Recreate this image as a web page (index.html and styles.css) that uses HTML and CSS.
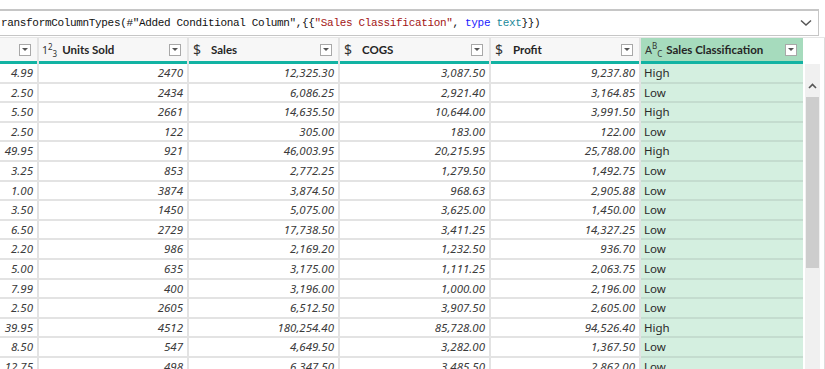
FILE: index.html
```html
<!DOCTYPE html>
<html lang="en">
<head>
  <meta charset="UTF-8">
  <meta name="viewport" content="width=device-width, initial-scale=1.0">
  <title>Query Editor - Sales Classification</title>
  <link rel="stylesheet" href="styles.css">
</head>
<body>
  <!-- formula bar -->
  <div class="formula-bar">
    <div class="formula-box">
      <div class="formula-text">ransformColumnTypes(#"Added Conditional Column",{{<span class="str">"Sales Classification"</span>, <span class="kw">type</span> <span class="ty">text</span>}})</div>
      <svg class="formula-toggle" width="12" height="8" viewBox="0 0 12 8">
        <path d="M1 1.5 L6 6 L11 1.5" fill="none" stroke="#555" stroke-width="1.5"/>
      </svg>
    </div>
  </div>

  <div class="grid-area">
    <div class="table">
      <div class="row header">
        <div class="hcell">
          <div class="hcell-inner"><span class="drop"></span></div>
          <div class="hcell-line"></div>
        </div>
        <div class="hcell">
          <div class="hcell-inner"><span class="type-icon num-icon">1<sup>2</sup><sub>3</sub></span><span class="hlabel">Units Sold</span><span class="drop"></span></div>
          <div class="hcell-line"></div>
        </div>
        <div class="hcell">
          <div class="hcell-inner"><span class="type-icon dollar">$</span><span class="hlabel">Sales</span><span class="drop"></span></div>
          <div class="hcell-line"></div>
        </div>
        <div class="hcell">
          <div class="hcell-inner"><span class="type-icon dollar">$</span><span class="hlabel">COGS</span><span class="drop"></span></div>
          <div class="hcell-line"></div>
        </div>
        <div class="hcell">
          <div class="hcell-inner"><span class="type-icon dollar">$</span><span class="hlabel">Profit</span><span class="drop"></span></div>
          <div class="hcell-line"></div>
        </div>
        <div class="hcell selected">
          <div class="hcell-inner"><span class="type-icon text-icon">A<sup>B</sup><sub>C</sub></span><span class="hlabel">Sales Classification</span><span class="drop"></span></div>
          <div class="hcell-line"></div>
        </div>
      </div>
      <div id="rows"></div>
    </div>

    <div class="scrollbar">
      <div class="track">
        <svg class="scroll-up" width="9" height="6" viewBox="0 0 9 6">
          <path d="M1 5 L4.5 1.5 L8 5" fill="none" stroke="#555" stroke-width="1.6"/>
        </svg>
        <div class="thumb"></div>
      </div>
    </div>
  </div>

  <script>
    // 行データ: 単価, 販売数, 売上, 原価, 利益, 分類
    var data = [
      ['4.99', '2470', '12,325.30', '3,087.50', '9,237.80', 'High'],
      ['2.50', '2434', '6,086.25', '2,921.40', '3,164.85', 'Low'],
      ['5.50', '2661', '14,635.50', '10,644.00', '3,991.50', 'High'],
      ['2.50', '122', '305.00', '183.00', '122.00', 'Low'],
      ['49.95', '921', '46,003.95', '20,215.95', '25,788.00', 'High'],
      ['3.25', '853', '2,772.25', '1,279.50', '1,492.75', 'Low'],
      ['1.00', '3874', '3,874.50', '968.63', '2,905.88', 'Low'],
      ['3.50', '1450', '5,075.00', '3,625.00', '1,450.00', 'Low'],
      ['6.50', '2729', '17,738.50', '3,411.25', '14,327.25', 'Low'],
      ['2.20', '986', '2,169.20', '1,232.50', '936.70', 'Low'],
      ['5.00', '635', '3,175.00', '1,111.25', '2,063.75', 'Low'],
      ['7.99', '400', '3,196.00', '1,000.00', '2,196.00', 'Low'],
      ['2.50', '2605', '6,512.50', '3,907.50', '2,605.00', 'Low'],
      ['39.95', '4512', '180,254.40', '85,728.00', '94,526.40', 'High'],
      ['8.50', '547', '4,649.50', '3,282.00', '1,367.50', 'Low'],
      ['12.75', '498', '6,347.50', '3,485.50', '2,862.00', 'Low']
    ];

    var rows = document.getElementById('rows');
    data.forEach(function(r) {
      var row = document.createElement('div');
      row.className = 'row';
      r.forEach(function(v, i) {
        var cell = document.createElement('div');
        cell.className = i === 5 ? 'cell text selected' : 'cell num';
        cell.textContent = v;
        row.appendChild(cell);
      });
      rows.appendChild(row);
    });
  </script>
</body>
</html>
```

FILE: styles.css
```css
html, body {
  margin: 0;
  padding: 0;
  height: 369px;
  overflow: hidden;
  background: #fff;
  font-family: "Noto Sans", "Open Sans", Arial, sans-serif;
}

/* formula bar */
.formula-bar {
  height: 37px;
  padding-top: 9px;
  box-sizing: border-box;
}

.formula-box {
  height: 27px;
  margin-right: 6px;
  border: 1px solid #c6c6c6;
  border-top: 2px solid #c6c6c6;
  border-left: none;
  box-sizing: border-box;
  display: flex;
  align-items: center;
  padding: 0 6px 0 1px;
}

.formula-text {
  flex: 1;
  font-family: "Liberation Mono", "DejaVu Sans Mono", monospace;
  font-size: 11px;
  letter-spacing: -0.33px;
  color: #111;
  white-space: nowrap;
  overflow: hidden;
}

.formula-text .str { color: #a31515; }
.formula-text .kw { color: #1a1aff; }
.formula-text .ty { color: #1c8a9a; }

/* grid */
.grid-area {
  display: flex;
  border-top: 1px solid #e6e6e6;
}

.table {
  width: 803px;
}

.row {
  display: grid;
  grid-template-columns: 39px 150px 151px 151px 150px 162px;
}

.hcell {
  display: flex;
  flex-direction: column;
  background: #f7f7f7;
  border-right: 2px solid #e3e3e3;
}

.hcell.selected {
  background: #a6dbbd;
  border-right: none;
}

.hcell-inner {
  height: 23px;
  display: flex;
  align-items: center;
  padding: 0 6px 0 2px;
  font-family: Lato, "Noto Sans", sans-serif;
  font-size: 11.5px;
  font-weight: 700;
  color: #252525;
}

.hcell-line {
  height: 3px;
  background: #12b3a3;
}

.type-icon {
  font-family: "Noto Sans", sans-serif;
  font-size: 11px;
  font-weight: 400;
  color: #333;
  white-space: nowrap;
  flex: none;
}

.type-icon sup,
.type-icon sub {
  font-size: 8px;
  line-height: 0;
}

.type-icon.num-icon {
  font-size: 10.5px;
  padding-left: 1px;
  margin-right: 5px;
}

.type-icon.text-icon {
  font-size: 11px;
  padding-left: 2px;
  margin-right: 4px;
}

.type-icon.dollar {
  font-size: 14px;
  width: 18px;
  padding-left: 2px;
}

.hlabel {
  flex: 1;
  white-space: nowrap;
}

.drop {
  width: 10px;
  height: 10px;
  border: 1px solid #a8a8a8;
  background: #fff;
  display: flex;
  align-items: center;
  justify-content: center;
  margin-left: auto;
  flex: none;
}

.drop::after {
  content: "";
  border-left: 3px solid transparent;
  border-right: 3px solid transparent;
  border-top: 3px solid #555;
}

.cell {
  height: 19.6px;
  line-height: 17.6px;
  box-sizing: border-box;
  border-right: 2px solid #e3e3e3;
  border-bottom: 2px solid #e3e3e3;
  font-size: 11.5px;
  color: #3a3a3a;
  white-space: nowrap;
  overflow: hidden;
}

.cell.num {
  text-align: right;
  font-style: italic;
  padding-right: 4px;
}

.cell.text {
  padding-left: 3px;
  color: #2a2a2a;
}

.cell.selected {
  background: #d4efe0;
  border-right: none;
  border-bottom-color: #c4dccf;
}

/* scrollbar */
.scrollbar {
  width: 22px;
  padding: 26px 4px 0 2px;
  box-sizing: border-box;
  border-right: 1px solid #dcdcdc;
}

.track {
  width: 15px;
  height: 320px;
  background: #f0f0f0;
  display: flex;
  flex-direction: column;
  align-items: center;
}

.scroll-up {
  margin-top: 19px;
}

.thumb {
  width: 13px;
  height: 171px;
  margin-top: 8px;
  background: #cdcdcd;
}
```
